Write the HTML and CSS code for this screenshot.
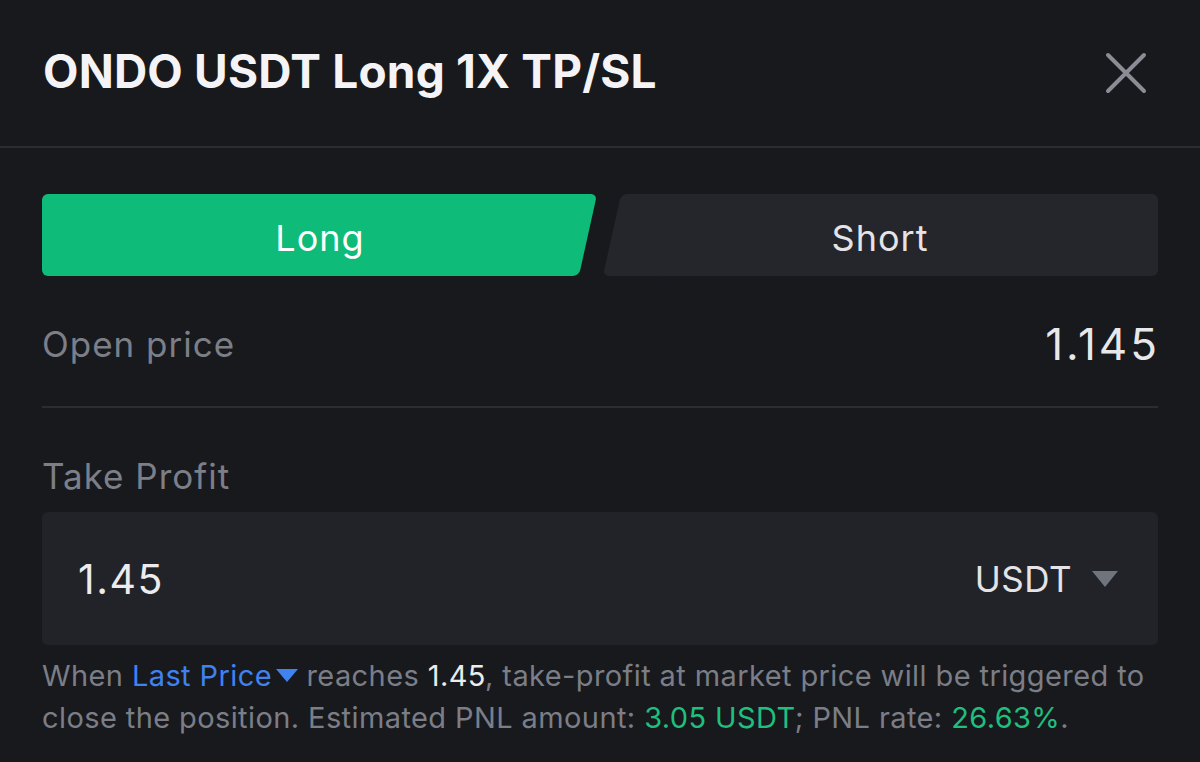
FILE: index.html
```html
<!DOCTYPE html>
<html lang="en">
<head>
<meta charset="utf-8">
<title>ONDO USDT Long 1X TP/SL</title>
<link rel="stylesheet" href="styles.css">
</head>
<body>
<div class="sheet">
  <header class="head">
    <h1 class="title">ONDO USDT Long 1X TP/SL</h1>
    <button class="close" aria-label="Close">
      <svg width="44" height="44" viewBox="0 0 44 44"><path d="M4 4 L40 40 M40 4 L4 40" stroke="#8a8d95" stroke-width="4" stroke-linecap="round" fill="none"/></svg>
    </button>
  </header>
  <div class="body">
    <div class="tabs">
      <div class="tab tab-long"><span>Long</span></div>
      <div class="tab tab-short"><span>Short</span></div>
    </div>
    <div class="row">
      <span class="label">Open price</span>
      <span class="value">1.145</span>
    </div>
    <div class="divider"></div>
    <div class="label tp-label">Take Profit</div>
    <div class="input">
      <span class="input-val">1.45</span>
      <span class="unit">USDT <span class="tri"></span></span>
    </div>
    <p class="note">When <span class="link">Last Price<span class="tri-blue"></span></span> reaches <span class="hi">1.45</span>, take-profit at market price will be triggered to close the position. Estimated PNL amount: <span class="green">3.05 USDT</span>; PNL rate: <span class="green">26.63%</span>.</p>
  </div>
</div>
</body>
</html>
```

FILE: styles.css
```css
* { box-sizing: border-box; }
html, body { margin: 0; padding: 0; background: #18191d; }
body { font-family: Inter, "Noto Sans", sans-serif; color: #e8e8ea; }
.sheet {
  width: 1200px;
  height: 762px;
  background: #18191d;
  border-top-left-radius: 18px;
  overflow: hidden;
}
.head {
  height: 148px;
  display: flex;
  align-items: center;
  justify-content: space-between;
  padding: 0 52px 0 43px;
  border-bottom: 2px solid #2c2d32;
}
.title {
  margin: 0;
  font-size: 46px;
  font-weight: 700;
  color: #f4f4f6;
  letter-spacing: 0.2px;
  padding-bottom: 4px;
}
.close {
  background: none;
  border: 0;
  padding: 0;
  display: flex;
}
.body { padding: 46px 42px 0 42px; }
.tabs {
  display: flex;
  gap: 4px;
  height: 82px;
}
.tab {
  position: relative;
  flex: 1;
  display: flex;
  align-items: center;
  justify-content: center;
  font-size: 36px;
  letter-spacing: 1px;
  padding-top: 6px;
  isolation: isolate;
}
.tab span { position: relative; z-index: 1; }
.tab-long { color: #ffffff; }
.tab-long::before {
  content: "";
  position: absolute;
  top: 0; bottom: 0; left: 0; right: 30px;
  background: #0fbb79;
  border-radius: 6px 0 0 6px;
}
.tab-long::after {
  content: "";
  position: absolute;
  top: 0; bottom: 0; right: 10px; width: 60px;
  background: #0fbb79;
  border-radius: 6px;
  transform: skewX(-12.5deg);
}
.tab-short { color: #e4e4e7; }
.tab-short::before {
  content: "";
  position: absolute;
  top: 0; bottom: 0; right: 0; left: 30px;
  background: #25262b;
  border-radius: 0 6px 6px 0;
}
.tab-short::after {
  content: "";
  position: absolute;
  top: 0; bottom: 0; left: 10px; width: 60px;
  background: #25262b;
  border-radius: 6px;
  transform: skewX(-12.5deg);
}
.row {
  display: flex;
  justify-content: space-between;
  align-items: center;
  height: 130px;
  padding-top: 6px;
}
.label { color: #7c7f88; font-size: 35px; letter-spacing: 1px; }
.value {
  font-size: 44px;
  color: #e8e8ea;
  letter-spacing: 3px;
  margin-right: -2px;
}
.divider { height: 2px; background: #2c2d32; }
.tp-label { margin-top: 46px; line-height: 44px; }
.input {
  margin-top: 14px;
  height: 133px;
  background: #222328;
  border-radius: 6px;
  display: flex;
  align-items: center;
  justify-content: space-between;
  padding: 0 40px 0 36px;
}
.input-val { font-size: 41px; color: #ececee; letter-spacing: 1.5px; }
.unit { font-size: 35px; color: #e4e4e7; display: flex; align-items: center; gap: 20px; letter-spacing: 0.5px; }
.tri {
  width: 0; height: 0;
  border-left: 13px solid transparent;
  border-right: 13px solid transparent;
  border-top: 16px solid #70747d;
}
.note {
  margin: 10px 0 0 0;
  font-size: 29px;
  line-height: 42px;
  letter-spacing: 0.4px;
  color: #7b7e87;
}
.link { color: #3f82f0; }
.tri-blue {
  display: inline-block;
  width: 0; height: 0;
  margin-left: 4px;
  vertical-align: 4px;
  border-left: 11px solid transparent;
  border-right: 11px solid transparent;
  border-top: 13px solid #3f82f0;
}
.hi { color: #ececee; }
.green { color: #1fbf7e; }
```
